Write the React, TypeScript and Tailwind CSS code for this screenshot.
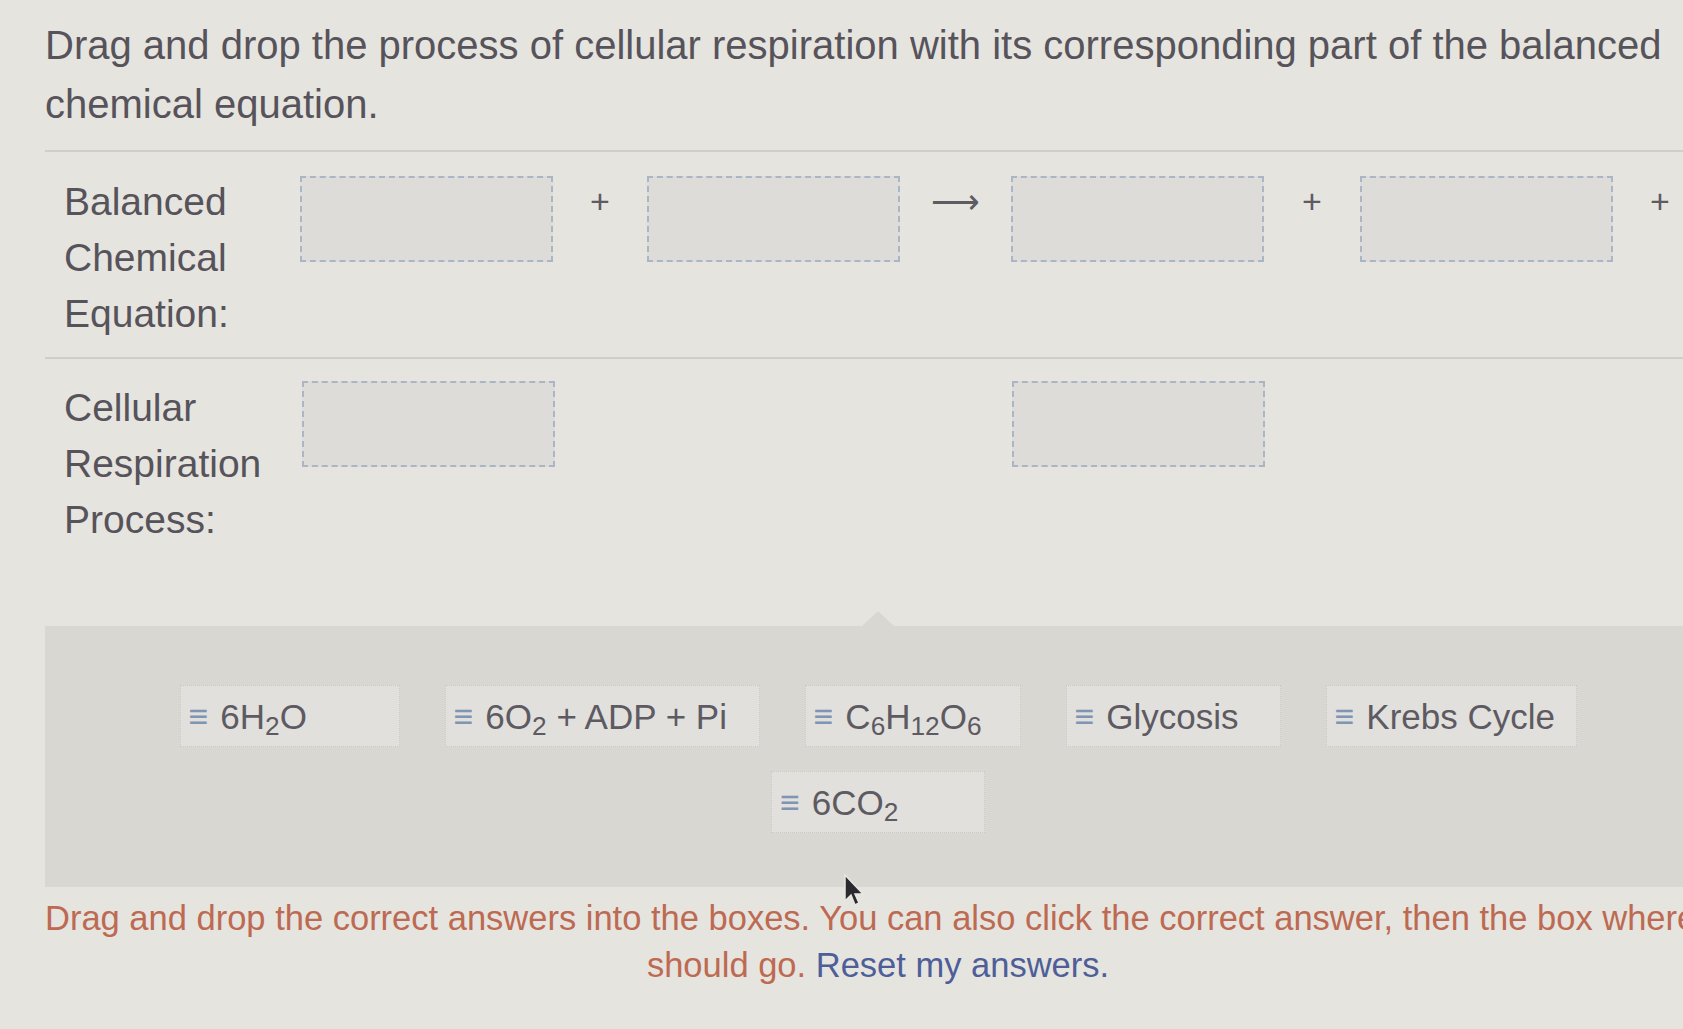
import React from "react";

const font = { fontFamily: '"Liberation Sans", Arial, sans-serif' };

function DropBox() {
  return (
    <div className="h-[86px] w-[253px] border-2 border-dashed border-[#aab5c6] bg-[#dddcd8]" />
  );
}

function Symbol({ children, w }: { children: React.ReactNode; w: string }) {
  return (
    <div className={`${w} flex justify-center pt-[1px] text-[34px] font-light leading-[48px] text-[#5f5b63]`}>
      {children}
    </div>
  );
}

const tiles: { w: string; label: React.ReactNode }[] = [
  { w: "w-[220px]", label: <>6H<sub>2</sub>O</> },
  { w: "w-[315px]", label: <>6O<sub>2</sub> + ADP + Pi</> },
  { w: "w-[216px]", label: <>C<sub>6</sub>H<sub>12</sub>O<sub>6</sub></> },
  { w: "w-[215px]", label: <>Glycosis</> },
  { w: "w-[251px]", label: <>Krebs Cycle</> },
  { w: "w-[214px]", label: <>6CO<sub>2</sub></> },
];

export default function App() {
  return (
    <div className="relative h-screen w-full overflow-hidden bg-[#e6e4df] text-[#56535b]" style={font}>
      <div className="ml-[45px] w-[1666px]">
        <h1 className="whitespace-nowrap pt-[16px] pb-[16px] text-[40px] leading-[59px]">
          Drag and drop the process of cellular respiration with its corresponding part of the balanced
          <br />
          chemical equation.
        </h1>

        <div className="border-t-2 border-[#d0cec8]">
          <div className="flex pt-[22px] pb-[15px]">
            <div className="w-[255px] pl-[19px] text-[39px] leading-[56px]">
              Balanced
              <br />
              Chemical
              <br />
              Equation:
            </div>
            <div className="flex items-start pt-[2px]">
              <DropBox />
              <Symbol w="w-[94px]">+</Symbol>
              <DropBox />
              <Symbol w="w-[111px]">⟶</Symbol>
              <DropBox />
              <Symbol w="w-[96px]">+</Symbol>
              <DropBox />
              <Symbol w="w-[94px]">+</Symbol>
            </div>
          </div>
        </div>

        <div className="border-t-2 border-[#d0cec8]">
          <div className="flex pt-[21px]">
            <div className="w-[255px] pl-[19px] text-[39px] leading-[56px]">
              Cellular
              <br />
              Respiration
              <br />
              Process:
            </div>
            <div className="flex items-start pt-[1px]">
              <div className="pl-[2px]">
                <DropBox />
              </div>
              <div className="w-[94px]" />
              <div className="w-[253px]" />
              <div className="w-[110px]" />
              <DropBox />
            </div>
          </div>
        </div>

        <div className="relative mt-[78px] bg-[#d8d7d2] px-[100px] pt-[59px] pb-[54px]">
          <div className="absolute -top-[15px] left-1/2 h-0 w-0 -translate-x-1/2 border-x-[16px] border-b-[15px] border-x-transparent border-b-[#d8d7d2]" />
          <div className="flex flex-wrap justify-center gap-x-[45px] gap-y-[24px]">
            {tiles.map((t, i) => (
              <div
                key={i}
                className={`${t.w} flex h-[62px] items-center gap-[12px] border border-dotted border-[#cbc9c4] bg-[#e1e0dc] px-[8px] text-[35px] text-[#5d5a62]`}
              >
                <span className="text-[34px] leading-none text-[#7f95b3]">≡</span>
                <span className="leading-none">{t.label}</span>
              </div>
            ))}
          </div>
        </div>

        <p className="whitespace-nowrap pt-[8px] text-center text-[34.5px] leading-[47px] text-[#bd6a52]">
          Drag and drop the correct answers into the boxes. You can also click the correct answer, then the box where it
          <br />
          should go. <span className="text-[#4e5e98]">Reset my answers.</span>
        </p>
      </div>

      <svg className="absolute left-[843px] top-[873px]" width="22" height="34" viewBox="0 0 22 34">
        <path d="M2 2 L2 28 L8 22 L12 32 L16 30 L12 21 L20 21 Z" fill="#2a2a2e" stroke="#e8e6e1" strokeWidth="1.5" />
      </svg>
    </div>
  );
}
